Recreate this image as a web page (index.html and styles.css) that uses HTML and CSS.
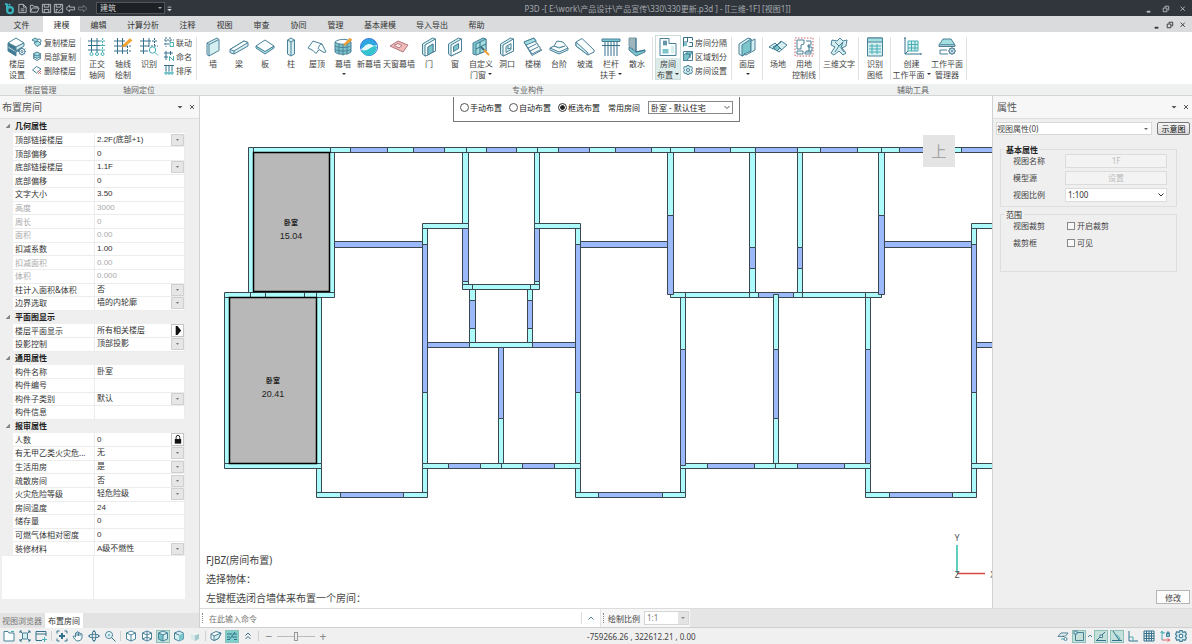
FILE: index.html
```html
<!DOCTYPE html>
<html lang="zh-CN">
<head>
    <meta charset="UTF-8">
    <meta name="viewport" content="width=device-width, initial-scale=1.0">
    <title>P3D</title>
    <link rel="stylesheet" href="styles.css">
</head>
<body>

    <header class="titlebar">
        <div class="quick">
            <svg class="logo" viewBox="0 0 12 12"><circle cx="6.500" cy="7.500" r="2.700"/><path d="M2 1.500l1.800 1v5"/><circle class="dot" cx="6" cy="2.500" r="1"/></svg>
            <button aria-label="新建"><svg viewBox="0 0 12 12"><path d="M2 1.500h5l3 3v6H2zM7 1.500v3h3M4 6.500h4M4 8.500h4"/></svg></button>
            <button aria-label="打开"><svg viewBox="0 0 12 12"><path d="M1.500 10V2.500h3l1 1.500h4v1.500M1.500 10l2-4.500H11L9 10z"/></svg></button>
            <button aria-label="保存"><svg viewBox="0 0 12 12"><path d="M1.500 1.500h9v9h-9zM3.500 1.500v3h5v-3M3.500 10.500V7h5v3.500"/></svg></button>
            <button aria-label="另存为"><svg viewBox="0 0 12 12"><path d="M1.500 1.500h9v9h-9zM3.500 1.500v3h5v-3M3.500 10.500V7h2M6 9.500l4-4"/></svg></button>
            <button aria-label="撤销"><svg viewBox="0 0 12 12"><path d="M1 6l4-3.500v2h5.500v3H5v2z"/></svg></button>
            <button aria-label="重做" class="off"><svg viewBox="0 0 12 12"><path d="M11 6L7 2.500v2H1.500v3H7v2z"/></svg></button>
            <select class="domain" aria-label="专业"><option>建筑</option></select>
            <button aria-label="自定义工具栏" class="more"><svg viewBox="0 0 8 12"><path d="M2 4.500h4"/><path class="solid" d="M1.500 6.500h5L4 9z"/></svg></button>
        </div>
        <div class="caption">P3D -[ E:\work\产品设计\产品宣传\330\330更新.p3d ] - [[三维-1F] [视图1]]</div>
        <div class="winbtns">
            <button aria-label="最小化"><svg viewBox="0 0 12 12"><path class="fat" d="M4 9.500h4"/></svg></button>
            <button aria-label="还原"><svg viewBox="0 0 12 12"><path d="M3.500 5.500h4v4h-4zM5.500 5V3.500h4v4H8"/></svg></button>
            <button aria-label="关闭"><svg viewBox="0 0 12 12"><path d="M4 4l4.500 4.500M8.500 4L4 8.500"/></svg></button>
        </div>
    </header>

    <nav class="tabs">
        <button class="file">文件</button>
        <button class="active">建模</button>
        <button>编辑</button>
        <button>计算分析</button>
        <button>注释</button>
        <button>视图</button>
        <button>审查</button>
        <button>协同</button>
        <button>管理</button>
        <button>基本建模</button>
        <button>导入导出</button>
        <button>帮助</button>
        <div class="docbtns">
            <button aria-label="最小化视图"><svg viewBox="0 0 12 12"><path class="fat" d="M4 9.500h4"/></svg></button>
            <button aria-label="还原视图"><svg viewBox="0 0 12 12"><path d="M3.500 5.500h4v4h-4zM5.500 5V3.500h4v4H8"/></svg></button>
            <button aria-label="关闭视图"><svg viewBox="0 0 12 12"><path d="M4 4l4.500 4.500M8.500 4L4 8.500"/></svg></button>
        </div>
    </nav>

    <section class="ribbon">
        <div class="group">
            <div class="tools first">
                <button class="big"><svg viewBox="0 0 20 20"><path class="w" d="M1 6l8-5 8 5-8 4z"/><path class="d" d="M1 6v3l8 5v-4zM1 11v3l8 5v-3.500z"/><path class="l" d="M9 10l8-4v3l-8 5zM1 9v2l8 4.500V14zM9 15l5-3v-1l-5 3"/><circle class="w" cx="15" cy="14.500" r="3"/><circle class="w" cx="15" cy="14.500" r="1"/><path d="M15 10.500v1.500M15 17v1.500M11 14.500h1.500M17.500 14.500H19M12.200 11.700l1 1M17.800 11.700l-1 1M12.200 17.300l1-1M17.800 17.300l-1-1"/></svg><span>楼层<br>设置</span></button>
                <div class="stack">
                    <button><svg viewBox="0 0 10 10"><path class="t" d="M0 3l3-2 4 2-3 2z"/><circle class="w" cx="7" cy="4" r="2"/><path class="t" d="M2 6l4-2 3 3-4 2.500z"/></svg>复制楼层</button>
                    <button><svg viewBox="0 0 10 10"><path class="w" d="M1 7l4-2 4 2-4 2.500z"/><path class="t" d="M1 5l4-2 4 2-4 2.500z"/><path class="t" d="M1 3l4-2 4 2-4 2z"/></svg>局部复制</button>
                    <button><svg viewBox="0 0 10 10"><path class="w" d="M0.500 5l4-3.500L9 4 4.500 8z"/><path class="red" d="M6 6l3 3M9 6L6 9"/></svg>删除楼层</button>
                </div>
                <i class="end"></i>
            </div>
            <div class="name">楼层管理</div>
        </div>

        <div class="group">
            <div class="tools">
                <button class="big"><svg viewBox="0 0 20 20"><path class="dk" d="M4.500 1v14M10 1v14M1 4h12M1 8.500h12M1 13h12"/><path class="tl dash" d="M15.500 1v14M13 4h6M13 8.500h6M13 13h6"/><circle class="tl" cx="4.500" cy="17" r="1.500"/><circle class="tl" cx="10" cy="17" r="1.500"/><circle class="tl" cx="15.500" cy="17" r="1.500"/></svg><span>正交<br>轴网</span></button>
                <button class="big"><svg viewBox="0 0 20 20"><path class="dk" d="M4.500 1v16M9.500 1v16M1 4h11M1 9h12M1 14h12"/><path class="dk dash" d="M14.500 9v9M13 9h6M13 14h6"/><path class="pen" d="M10 8l7-6.500 2 2L12 9.500l-3 .5z"/></svg><span>轴线<br>绘制</span></button>
                <button class="big"><svg viewBox="0 0 20 20"><path class="dk" d="M4.500 1v16M10 1v9M1 4h11M1 9h9M1 14h8"/><path class="dk dash" d="M15.500 1v9M13 4h6M12 9h7"/><circle class="tl" cx="13.500" cy="13" r="3.200"/><path class="tl" d="M16 15.500l3 3"/></svg><span>识别</span></button>
                <div class="stack">
                    <button><svg viewBox="0 0 10 10"><path class="dk dash" d="M2 0v10M6 0v5M0 3h10M0 7h5"/><path class="tl" d="M6 5.500h3.500v4H6z"/></svg>联动</button>
                    <button><svg viewBox="0 0 10 10"><path class="dk" d="M2 0v9M6.500 0v4M0 2h9M0 6h4"/><path class="tl" d="M5.500 10V5.500l4 4V5"/></svg>命名</button>
                    <button><svg viewBox="0 0 10 10"><path class="dk" d="M0 .5h10M2 0v6M5 0v6M8 0v6"/><path class="tl" d="M1 7h2v2H1zM4 7h2v2H4zM7 7h2v2H7z"/></svg>排序</button>
                </div>
                <i class="end"></i>
            </div>
            <div class="name">轴网定位</div>
        </div>

        <div class="group">
            <div class="tools">
                <button class="big"><svg viewBox="0 0 20 20"><path class="l" d="M4 6l10-5 2 1.500v11L6 19l-2-1.500z"/><path d="M4 6l2 1.500V19M6 7.500l10-5"/></svg><span>墙</span></button>
                <button class="big"><svg viewBox="0 0 20 20"><path class="l" d="M1 12.500L15 4l4 1.500V9L5 17l-4-1.500z"/><path class="w" d="M1 12.500L15 4l4 1.500-14 8.500z"/><path d="M5 14v3"/></svg><span>梁</span></button>
                <button class="big"><svg viewBox="0 0 20 20"><path class="t" d="M1 9l9 5 9-5v2l-9 6-9-6z"/><path class="w" d="M1 9l9-6 9 6-9 5.500z"/></svg><span>板</span></button>
                <button class="big"><svg viewBox="0 0 20 20"><path class="l" d="M6.500 3L10 1l3.500 2v14L10 19l-3.500-2z"/><path d="M6.500 3L10 5l3.500-2M10 5v14"/></svg><span>柱</span></button>
                <button class="big"><svg viewBox="0 0 20 20"><path class="w" d="M1 11l5-7 9 3 4 8-2 .5-5-3-3 4-3-3z"/><path d="M15 7c-3 0-3 3-4 5"/></svg><span>屋顶</span></button>
                <button class="big"><svg viewBox="0 0 20 20"><path class="m" d="M2 5l8 2 8-2v10c-3 3-13 3-16 0z"/><path class="w" d="M2 5c3-3 12-4 16 0-4 3-12 3-16 0z"/><path d="M2 9c4 2 12 2 16 0M2 12.500c4 2 12 2 16 0M6 6.500v11M10 7v11.500M14 6.500v11"/><path class="pen" d="M11 7l6-6 2 2-6.500 5-2 .5z"/></svg><span>幕墙<br><b></b></span></button>
                <button class="big"><svg viewBox="0 0 20 20"><circle cx="10" cy="10" r="8.500" fill="#2da7df" stroke="#3d78e0"/><path d="M2 12c3-1 4-5 8-5 3 0 4 3 8 1 .5 6-3 10-8 10-4 0-7-3-8-6z" fill="#e4fbfb" stroke="none"/><path d="M2 12.500c5 3 9-2 12-3 2-.5 3 0 4 0-1 6-4 9-8 9s-7-2-8-6z" fill="#35c3cd" stroke="none"/></svg><span>新幕墙</span></button>
                <button class="big wide"><svg viewBox="0 0 20 20"><path d="M1 9l8-5 10 4-5 7z" fill="#f2b9b9" stroke="#b07a80"/><path d="M5 8.500l4-2 4 2-3 2.500z" fill="#fde8e6" stroke="#b07a80"/></svg><span>天窗幕墙</span></button>
                <button class="big"><svg viewBox="0 0 20 20"><path class="l" d="M3.500 7l10-6 3 1v12L6 19l-2.500-2z"/><path class="w" d="M6 8l10.500-6v12L14 15V7l-5 3v8l-3 1z"/><path class="m" d="M9 10l5-3v8l-5 3z"/></svg><span>门</span></button>
                <button class="big"><svg viewBox="0 0 20 20"><path class="l" d="M3.500 7l10-6 3 1v12L6 19l-2.500-2z"/><path class="w" d="M6 8l10.500-6v12L6 19z"/><path class="m" d="M8.500 9.500l5-3v5l-5 3z"/></svg><span>窗</span></button>
                <button class="big"><svg viewBox="0 0 20 20"><path class="m" d="M2 6l10-5 3 1v12L5 18l-3-1z"/><path class="t" d="M5 7l10-5v12L5 18z"/><path class="dk" d="M5 12l10-5M9 5v11"/><path d="M12 12l6 6" stroke="#f0a030" stroke-width="2"/><path d="M10 10l3 3" stroke="#3e7085" stroke-width="2"/></svg><span>自定义<br>门窗<b></b></span></button>
                <button class="big"><svg viewBox="0 0 20 20"><path class="l" d="M3.500 7l10-6 3 1v12L6 19l-2.500-2z"/><path class="w" d="M6 8l10.500-6v12L6 19z"/><path class="l" d="M9 9.500l5-3v6l-5 3zM11 9v3l3-1"/></svg><span>洞口</span></button>
                <button class="big"><svg viewBox="0 0 20 20"><path class="w" d="M1 5l10-4 2 3v2l2 1v2l2 1v2l2 1-10 5.500z"/><path class="t" d="M1 5l10-4 2 3L3 8z"/><path d="M3 8l2 3 8-4M5 11l2 3 8-4M7 14l2 3 8-4"/></svg><span>楼梯</span></button>
                <button class="big"><svg viewBox="0 0 20 20"><path class="l" d="M1 11l9-3 9 3v2l-9 4-9-4z"/><path class="w" d="M1 11l4-2 3-5 6 1 5 6-9 4zM5 9l5 2 6-2"/></svg><span>台阶</span></button>
                <button class="big"><svg viewBox="0 0 20 20"><path class="w" d="M1 9V5l6-3.500L19 13v2l-6 3z"/><path class="l" d="M1 5l12 11v2L1 9z"/></svg><span>坡道</span></button>
                <button class="big"><svg viewBox="0 0 20 20"><path class="m" d="M1 2h18v2.500H1z"/><path class="dk" d="M4 4v15M7 4v15M10 4v15M13 4v15M16 4v15M1 8.500h18"/></svg><span>栏杆<br>扶手<b></b></span></button>
                <button class="big"><svg viewBox="0 0 20 20"><path d="M2 1h7v13l-7-5z" fill="#9fb6bf" stroke="#7b97a2"/><path class="m" d="M2 10l7 5 9-2v2l-9 4-7-6z"/><path class="dk" d="M9 1v14l9-2"/></svg><span>散水</span></button>
                <i></i>
                <button class="big on"><svg viewBox="0 0 20 20"><path class="w" d="M2 1.500h9v5h7v12H2z"/><path class="dk" d="M5 5h4M5 7h4M6 3.500v5M8 3.500v5"/><path class="m thin" d="M4.500 12h6v4.500h-6z"/><path class="l thin" d="M13 9h3v7h-3z"/></svg><span>房间<br>布置<b></b></span></button>
                <div class="stack">
                    <button><svg viewBox="0 0 10 10"><path class="dk" d="M.5 9.500v-9h9v3M.5 5h4V.500M6.500 5.500h3v4h-4"/><path class="m thin" d="M1 6h3v3H1z"/></svg>房间分隔</button>
                    <button><svg viewBox="0 0 10 10"><path class="w" d="M.5.5h9v9h-9z"/><path class="m" d="M.5 4.500L5 .500h4.500L4 9.500H.500z"/><path class="dk" d="M3 3h4v4"/></svg>区域划分</button>
                    <button><svg viewBox="0 0 10 10"><path class="l" d="M4 .5h2l.5 1.500 2-.5 1 2L8.500 5l1 1.500-1 2-2-.5L6 9.500H4L3.500 8l-2 .5-1-2L1.500 5l-1-1.500 1-2 2 .5z"/><circle class="w" cx="5" cy="5" r="1.500"/></svg>房间设置</button>
                </div>
                <i></i>
                <button class="big"><svg viewBox="0 0 20 20"><path class="l" d="M2 7l9-6 3 1v12L5 19l-3-2z"/><path class="m" d="M5 8l9-6v12L5 19z"/><path class="l" d="M14 4l4-2v11l-9 5-2-1 7-3z"/></svg><span>面层<br><b></b></span></button>
                <i></i>
                <button class="big"><svg viewBox="0 0 20 20"><path class="l" d="M1 10l6-4 2 2 4-4 6 4-8 7-3-2z"/><path class="m" d="M5 10l4-2 3 3-3 3z"/><path class="dk" d="M7 6l7 7M4 12l9-7"/></svg><span>场地</span></button>
                <button class="big"><svg viewBox="0 0 20 20"><path d="M1 1h18v18H1z" fill="none" stroke="#d0606a" stroke-dasharray="1.500 1.500"/><path class="w" d="M3 3h7v4l-3 1v4H3zM12 4h5v4h-3v2h4v4h-6M3 14h6v3H3zM11 15h6v2h-6z"/><path class="dk" d="M15 8v6"/></svg><span>用地<br>控制线</span></button>
                <i></i>
                <button class="big wide"><svg viewBox="0 0 20 20"><path class="l" d="M3 3l5 1 3-3 3 3 4-1-1 6-4 2 4 5-3 2-4-4-5 4-3-2 4-6-4-2z"/><path class="t" d="M6 5l4 4 4-4-2 6 3 4M10 9l-4 6"/></svg><span>三维文字</span></button>
                <i class="end"></i>
            </div>
            <div class="name">专业构件</div>
        </div>

        <div class="group">
            <div class="tools">
                <button class="big"><svg viewBox="0 0 20 20"><path class="l" d="M2.500 1h15v18h-15z"/><path class="t" d="M2.500 1h15v4h-15z"/><path class="tl" d="M7 7v10M12 7v10M4 9h12M4 12h12M4 15h12"/></svg><span>识别<br>图纸</span></button>
                <i></i>
                <button class="big plane"><svg viewBox="0 0 20 20"><path class="l thin" d="M6 4h10v10H6z"/><path class="tl" d="M6 4h10v10H6zM9.500 4v10M13 4v10M6 7.500h10M6 11h10"/><path class="dk" d="M3 1v16h16M2 1h2M19 16v2M3 17l3-3"/></svg><span>创建<br>工作平面<b></b></span></button>
                <button class="big wide"><svg viewBox="0 0 20 20"><path class="t" d="M6 2h8l4 6H2z"/><path class="w" d="M2 8h16v1.500H2zM3 13h7M3 13v4h8"/><circle class="w" cx="15" cy="14" r="3"/><circle class="w" cx="15" cy="14" r="1"/><path d="M15 10v1.500M15 16.500V18M11 14h1M18 14h1M12.500 11.500l1 1M17.500 16.500l-1-1M17.500 11.500l-1 1M12.500 16.500l1-1"/></svg><span>工作平面<br>管理器</span></button>
                <i class="end"></i>
            </div>
            <div class="name">辅助工具</div>
        </div>
    </section>

    <main>
        <aside class="left">
            <div class="panel-head">
                <h2>布置房间</h2>
                <button aria-label="面板菜单"><svg viewBox="0 0 12 12"><path class="solid" d="M3.500 5h5L6 7.500z"/></svg></button>
                <button aria-label="关闭面板"><svg viewBox="0 0 12 12"><path d="M4 4l4 4M8 4L4 8"/></svg></button>
            </div>
            <div class="props">
                <table>
                    <colgroup><col class="gutter"><col class="label"><col></colgroup>
                    <tbody>
                        <tr class="sec"><td><i></i></td><th colspan="2">几何属性</th></tr>
                        <tr><td></td><th><label for="p1">顶部链接楼层</label></th><td><select id="p1"><option>2.2F(底部+1)</option></select></td></tr>
                        <tr><td></td><th><label for="p2">顶部偏移</label></th><td><input id="p2" value="0"></td></tr>
                        <tr><td></td><th><label for="p3">底部链接楼层</label></th><td><select id="p3"><option>1.1F</option></select></td></tr>
                        <tr><td></td><th><label for="p4">底部偏移</label></th><td><input id="p4" value="0"></td></tr>
                        <tr><td></td><th><label for="p5">文字大小</label></th><td><input id="p5" value="3.50"></td></tr>
                        <tr class="dim"><td></td><th><label for="p6">高度</label></th><td><input id="p6" value="3000" disabled></td></tr>
                        <tr class="dim"><td></td><th><label for="p7">周长</label></th><td><input id="p7" value="0" disabled></td></tr>
                        <tr class="dim"><td></td><th><label for="p8">面积</label></th><td><input id="p8" value="0.00" disabled></td></tr>
                        <tr><td></td><th><label for="p9">扣减系数</label></th><td><input id="p9" value="1.00"></td></tr>
                        <tr class="dim"><td></td><th><label for="p10">扣减面积</label></th><td><input id="p10" value="0.00" disabled></td></tr>
                        <tr class="dim"><td></td><th><label for="p11">体积</label></th><td><input id="p11" value="0.000" disabled></td></tr>
                        <tr><td></td><th><label for="p12">柱计入面积&amp;体积</label></th><td><select id="p12"><option>否</option></select></td></tr>
                        <tr><td></td><th><label for="p13">边界选取</label></th><td><select id="p13"><option>墙的内轮廓</option></select></td></tr>
                        <tr class="sec"><td><i></i></td><th colspan="2">平面图显示</th></tr>
                        <tr><td></td><th><label for="p14">楼层平面显示</label></th><td class="act"><input id="p14" value="所有相关楼层"><button aria-label="选择楼层"><svg viewBox="0 0 12 12"><path d="M4 1h2l4 5-4 5H4z"/></svg></button></td></tr>
                        <tr><td></td><th><label for="p15">投影控制</label></th><td><select id="p15"><option>顶部投影</option></select></td></tr>
                        <tr class="sec"><td><i></i></td><th colspan="2">通用属性</th></tr>
                        <tr><td></td><th><label for="p16">构件名称</label></th><td><input id="p16" value="卧室"></td></tr>
                        <tr><td></td><th><label for="p17">构件编号</label></th><td><input id="p17"></td></tr>
                        <tr><td></td><th><label for="p18">构件子类别</label></th><td><select id="p18"><option>默认</option></select></td></tr>
                        <tr><td></td><th><label for="p19">构件信息</label></th><td><input id="p19"></td></tr>
                        <tr class="sec"><td><i></i></td><th colspan="2">报审属性</th></tr>
                        <tr><td></td><th><label for="p20">人数</label></th><td class="act"><input id="p20" value="0"><button aria-label="锁定人数"><svg viewBox="0 0 12 12"><path d="M3 5.500h7v5H3z"/><path class="ring" d="M4.500 5.500v-2a2 2 0 0 1 4 0v2"/></svg></button></td></tr>
                        <tr><td></td><th><label for="p21">有无甲乙类火灾危...</label></th><td><select id="p21"><option>无</option></select></td></tr>
                        <tr><td></td><th><label for="p22">生活用房</label></th><td><select id="p22"><option>是</option></select></td></tr>
                        <tr><td></td><th><label for="p23">疏散房间</label></th><td><select id="p23"><option>否</option></select></td></tr>
                        <tr><td></td><th><label for="p24">火灾危险等级</label></th><td><select id="p24"><option>轻危险级</option></select></td></tr>
                        <tr><td></td><th><label for="p25">房间温度</label></th><td><input id="p25" value="24"></td></tr>
                        <tr><td></td><th><label for="p26">储存量</label></th><td><input id="p26" value="0"></td></tr>
                        <tr><td></td><th><label for="p27">可燃气体相对密度</label></th><td><input id="p27" value="0"></td></tr>
                        <tr><td></td><th><label for="p28">装修材料</label></th><td><select id="p28"><option>A级不燃性</option></select></td></tr>
                    </tbody>
                </table>
            </div>
            <div class="blank"><span></span></div>
            <div class="panel-tabs">
                <button>视图浏览器</button>
                <button class="active">布置房间</button>
            </div>
        </aside>

        <div class="work">
            <div class="upper">
                <div class="canvas">
                    <svg class="plan" viewBox="200 96 792 512" preserveAspectRatio="xMinYMin slice">
                        <g transform="translate(.5 .5)">
                            <path class="room" d="M253 152h76v139h-76zM229 297h87v166h-87z"/>
                            <!-- walls -->
                            <path class="wall" d="M248 147h5v145h-5zM253 147h77v5h-77zM330 147h20v5h-20zM387 147h26v5h-26zM444 147h22v5h-22zM466 147h20v5h-20zM516 147h21v5h-21zM537 147h21v5h-21zM589 147h26v5h-26zM651 147h19v5h-19zM670 147h24v5h-24zM730 147h25v5h-25zM797 147h23v5h-23zM857 147h24v5h-24zM881 147h18v5h-18zM940 147h21v5h-21z
                                M329 152h5v140h-5zM224 292h26v5h-26zM250 292h15v5h-15zM265 292h39v5h-39zM304 292h12v5h-12zM316 292h18v5h-18z
                                M224 297h5v166h-5zM316 297h5v166h-5zM224 463h97v5h-97zM316 468h5v24h-5zM316 492h24v5h-24zM403 492h24v5h-24z
                                M422 223h46v5h-46zM422 228h5v16h-5zM422 392h5v71h-5zM422 468h5v24h-5z
                                M462 152h6v71h-6zM462 281h6v3h-6zM534 152h5v71h-5zM534 281h5v3h-5zM462 284h10v5h-10zM472 284h58v5h-58zM530 284h9v5h-9z
                                M534 223h46v5h-46zM575 228h5v16h-5zM575 392h5v71h-5zM575 468h5v24h-5z
                                M469 289h6v11h-6zM469 328h6v14h-6zM527 289h5v11h-5zM527 328h5v14h-5zM469 342h63v5h-63z
                                M498 418h5v45h-5zM422 463h26v5h-26zM480 463h21v5h-21zM501 463h21v5h-21zM554 463h26v5h-26zM575 492h23v5h-23zM662 492h23v5h-23z
                                M667 152h6v63h-6zM878 152h6v63h-6zM749 152h6v95h-6zM749 268h6v24h-6zM797 152h5v95h-5zM797 268h5v24h-5z
                                M670 292h15v5h-15zM685 292h64v5h-64zM749 292h9v5h-9zM793 292h9v5h-9zM802 292h63v5h-63zM865 292h16v5h-16z
                                M680 297h5v52h-5zM865 297h5v52h-5zM680 463h27v5h-27zM754 463h21v5h-21zM775 463h22v5h-22zM844 463h26v5h-26zM773 418h5v45h-5z
                                M680 468h5v24h-5zM865 468h5v24h-5zM865 492h24v5h-24zM952 492h24v5h-24z
                                M971 223h30v5h-30zM971 228h5v16h-5zM971 392h5v71h-5zM971 463h30v5h-30zM971 468h5v24h-5z"/>
                            <!-- windows, doors and beams -->
                            <path class="open" d="M350 147h37v5h-37zM413 147h31v5h-31zM486 147h30v5h-30zM558 147h31v5h-31zM615 147h36v5h-36zM694 147h36v5h-36zM755 147h42v5h-42zM820 147h37v5h-37zM899 147h41v5h-41zM961 147h40v5h-40z
                                M334 241h88v6h-88zM422 244h5v148h-5zM340 492h63v5h-63zM462 228h6v53h-6zM534 228h5v53h-5zM575 244h5v148h-5zM580 241h87v6h-87z
                                M469 300h6v28h-6zM527 300h5v28h-5zM427 342h42v5h-42zM532 342h43v5h-43zM498 347h5v71h-5zM448 463h32v5h-32zM522 463h32v5h-32zM598 492h64v5h-64z
                                M667 215h6v79h-6zM878 215h6v79h-6zM749 247h6v21h-6zM797 247h5v21h-5zM758 292h35v5h-35zM680 349h5v116h-5zM773 349h5v69h-5zM865 349h5v114h-5z
                                M707 463h47v5h-47zM797 463h47v5h-47zM889 492h63v5h-63zM884 241h87v6h-87zM971 244h5v148h-5zM976 342h30v5h-30z"/>
                            <path class="wall" d="M773 294h5v55h-5z"/>
                            <path class="edge" d="M253 152h76v139h-76zM229 297h87v166h-87z"/>
                        </g>
                        <text class="rname" x="291" y="225">卧室</text>
                        <text class="rarea" x="291" y="239">15.04</text>
                        <text class="rname" x="273" y="383">卧室</text>
                        <text class="rarea" x="273" y="397">20.41</text>
                        <path d="M957 545v28" stroke="#5fcfc0" stroke-width="2"/>
                        <path d="M957 573.500h28" stroke="#d64545" stroke-width="1.500"/>
                        <text class="axis" x="957" y="541">Y</text>
                        <text class="axis" x="957" y="578">Z</text>
                        <text class="axis" x="993" y="578">X</text>
                    </svg>

                    <form class="options">
                        <label><input type="radio" name="mode">手动布置</label>
                        <label><input type="radio" name="mode">自动布置</label>
                        <label><input type="radio" name="mode" checked>框选布置</label>
                        <label for="common">常用房间</label>
                        <select id="common"><option>卧室 - 默认住宅</option></select>
                    </form>

                    <div class="cube">上</div>

                    <div class="log">
                        <p>FJBZ(房间布置)</p>
                        <p>选择物体：</p>
                        <p>左键框选闭合墙体来布置一个房间：</p>
                    </div>
                </div>

                <aside class="right">
                    <div class="panel-head">
                        <h2>属性</h2>
                        <button aria-label="面板菜单"><svg viewBox="0 0 12 12"><path class="solid" d="M3.500 5h5L6 7.500z"/></svg></button>
                        <button aria-label="关闭面板"><svg viewBox="0 0 12 12"><path d="M4 4l4 4M8 4L4 8"/></svg></button>
                    </div>
                    <div class="pick">
                        <select aria-label="属性对象"><option>视图属性(0)</option></select>
                        <button>示意图</button>
                    </div>
                    <fieldset>
                        <legend class="strong">基本属性</legend>
                        <div class="field"><label for="vname">视图名称</label><input id="vname" value="1F" disabled></div>
                        <div class="field"><label for="vsrc">模型源</label><button id="vsrc" disabled>设置</button></div>
                        <div class="field"><label for="vscale">视图比例</label><select id="vscale"><option>1:100</option></select></div>
                    </fieldset>
                    <fieldset>
                        <legend>范围</legend>
                        <div class="field"><span>视图裁剪</span><label><input type="checkbox">开启裁剪</label></div>
                        <div class="field"><span>裁剪框</span><label><input type="checkbox">可见</label></div>
                    </fieldset>
                    <button class="modify">修改</button>
                </aside>
            </div>

            <div class="command">
                <div class="entry">
                    <i class="grip"></i>
                    <input aria-label="命令" placeholder="在此输入命令">
                    <button aria-label="展开"><svg viewBox="0 0 12 12"><path d="M3.500 7.500L6 5l2.500 2.500"/></svg></button>
                </div>
                <div class="scale">
                    <i class="grip"></i>
                    <label for="dscale">绘制比例</label>
                    <select id="dscale"><option>1:1</option></select>
                </div>
            </div>
        </div>
    </main>

    <footer class="status">
        <div class="status-left">
            <button aria-label="文件夹"><svg viewBox="0 0 12 12"><path class="w" d="M1 11V1.500h4L6 3h5v8z"/><path class="tl" d="M8 1.500h3"/></svg></button>
            <button aria-label="全图"><svg viewBox="0 0 12 12"><path class="dk" d="M1 1l2 2M11 1L9 3M1 11l2-2M11 11L9 9M1 3V1h2M9 1h2v2M1 9v2h2M9 11h2V9"/><path class="l" d="M3.500 3h5v6h-5z"/></svg></button>
            <button aria-label="新建窗口"><svg viewBox="0 0 12 12"><path class="dk" d="M7 10.500H1v-9h10V6M1 4h10"/><path class="tl" d="M9.500 7v5M7 9.500h5"/></svg></button>
            <i></i>
            <button aria-label="缩放全部"><svg viewBox="0 0 12 12"><path class="dk" d="M1 3.500V1h2.500M8.500 1H11v2.500M11 8.500V11H8.500M3.500 11H1V8.500"/><path class="dk fat" d="M6 3v6M3 6h6"/></svg></button>
            <button aria-label="平移"><svg viewBox="0 0 12 12"><path class="w" d="M3.500 7V3q.7-1 1.500 0V2q.7-1 1.500 0v1q.8-1 1.500 0v1q1-1 2 0v4q-1 3-4 3-2 0-3-1.500L1 6.500q1-1.500 2.500.5z"/><path d="M5 3v3M6.500 3v3M8 4v2"/></svg></button>
            <button aria-label="动态观察"><svg viewBox="0 0 12 12"><ellipse cx="6" cy="6" rx="5" ry="1.800"/><ellipse cx="6" cy="6" rx="1.800" ry="5"/><path class="dk" d="M4.500 2.500L6 .500l1.500 2M4.500 9.500l1.500 2 1.500-2M2.500 4.500L.500 6l2 1.500M9.500 4.500l2 1.500-2 1.500"/></svg></button>
            <button aria-label="窗口缩放"><svg viewBox="0 0 12 12"><circle class="w" cx="5" cy="5" r="3.500"/><circle class="m thin" cx="5" cy="5" r="1.500"/><path class="dk" d="M7.500 7.500l4 4"/></svg></button>
            <i></i>
            <button aria-label="线框"><svg viewBox="0 0 12 12"><path class="w" d="M6 1l4.500 2v6L6 11 1.500 9V3z"/><path d="M1.500 3L6 5l4.500-2M6 5v6"/></svg></button>
            <button aria-label="隐藏线"><svg viewBox="0 0 12 12"><path class="w" d="M6 1l4.500 2v6L6 11 1.500 9V3z"/><path d="M1.500 3L6 5l4.500-2M6 1v10M1.500 9L6 7l4.500 2"/></svg></button>
            <button aria-label="着色" class="on"><svg viewBox="0 0 12 12"><path class="l" d="M6 1l4.500 2v6L6 11 1.500 9V3z"/><path class="m" d="M1.500 3L6 5v6L1.500 9z"/><path d="M6 5l4.500-2"/></svg></button>
            <button aria-label="真实"><svg viewBox="0 0 12 12"><path class="l" d="M6 1l4.500 2v6L6 11 1.500 9V3z"/><path class="m thin" d="M6 5l4.500-2v6L6 11z"/><path d="M1.500 3L6 5"/></svg></button>
            <button aria-label="渲染"><svg viewBox="0 0 12 12"><path d="M2 4l4 1v6L2 9z" fill="#d9e8e8" stroke="none"/><path d="M6 5l4-1v5l-4 2z" fill="#a3c9cd" stroke="none"/><path d="M2 4l4-1 4 1-4 1z" fill="#eff7f7" stroke="none"/></svg></button>
            <i></i>
            <button aria-label="剖切"><svg viewBox="0 0 12 12"><path class="w" d="M1 4l5-2.500L11 3 8.500 8.500 4 10.500 1 9z"/><path class="l" d="M4 6l7-3-2.500 5.500-4.500 2z"/><path d="M1 4l3 2"/></svg></button>
            <button aria-label="图层" class="on deep"><svg viewBox="0 0 12 12"><path class="dk" d="M1 4h5M1 7h3M7 4h4M6 7h5M3 10l6-8M1 9.500h3M8 9.500h3"/></svg></button>
            <button aria-label="更多"><svg viewBox="0 0 12 12"><path class="dk" d="M3.500 5.500L6 3l2.500 2.500M3.500 9L6 6.500 8.500 9"/></svg></button>
            <i></i>
            <button aria-label="缩小" class="zoomer">−</button>
            <input type="range" aria-label="缩放" min="0" max="100" value="50">
            <button aria-label="放大" class="zoomer">+</button>
        </div>
        <output>-759266.26 , 322612.21 , 0.00</output>
        <div class="status-right">
            <button aria-label="显示"><svg viewBox="0 0 12 12"><path d="M1 6.500L4 3h7L8.500 6zM5 6.500h2"/><path class="tl" d="M4 9h3"/><circle class="w" cx="8.500" cy="9" r="1.500"/></svg></button>
            <button aria-label="捕捉" class="on"><svg viewBox="0 0 12 12"><path d="M2.500 2.500h8v8h-8z"/><path class="l" d="M1 1h3v3H1z"/></svg></button>
            <button aria-label="捕捉选项" class="tiny"><svg viewBox="0 0 6 12"><path d="M1 7l2-2 2 2"/></svg></button>
            <button aria-label="最近点" class="on"><svg viewBox="0 0 12 12"><path class="dk" d="M1 10.500h10M2 10L10 2"/><path class="w" d="M5 5h2.500v2.500H5z"/></svg></button>
            <button aria-label="极轴" class="on"><svg viewBox="0 0 12 12"><path class="dk" d="M1 10.500h10M2 1l6 9"/><path class="tl" d="M4 5q4 0 5 5"/></svg></button>
            <button aria-label="正交"><svg viewBox="0 0 12 12"><path class="dk" d="M2 1v10h9"/><path class="tl" d="M2 7h4v4"/></svg></button>
            <button aria-label="栅格"><svg viewBox="0 0 12 12"><path class="dk" d="M1 1h10v10H1zM3.500 1v10M6 1v10M8.500 1v10M1 3.500h10M1 6h10M1 8.500h10"/></svg></button>
            <button aria-label="坐标"><svg viewBox="0 0 12 12"><path class="tl" d="M3 10V2M1.500 3L3 1l1.500 2M3 3h3"/><path class="red" d="M3 10h7M8.500 8.500L11 10l-2.500 1.500"/><path class="m" d="M7.500 3.500h3v3h-3zM8 3.500V2h2v1.500"/></svg></button>
            <button aria-label="设置"><svg viewBox="0 0 10 10"><path class="l" d="M4 .5h2l.5 1.500 2-.5 1 2L8.500 5l1 1.500-1 2-2-.5L6 9.500H4L3.500 8l-2 .5-1-2L1.500 5l-1-1.500 1-2 2 .5z"/><circle class="w" cx="5" cy="5" r="1.500"/></svg></button>
        </div>
    </footer>

</body>
</html>
```
FILE: styles.css
```css
* {
    box-sizing: border-box;
}

body {
    margin: 0;
    height: 100vh;
    display: flex;
    flex-direction: column;
    overflow: hidden;
    background: #f0f0f0;
    color: #444;
    font-family: "Noto Sans", "Noto Sans CJK SC", sans-serif;
    font-size: 8px;
    line-height: 11px;
}

button, input, select {
    margin: 0;
    padding: 0;
    border: none;
    border-radius: 0;
    background: none;
    color: inherit;
    font: inherit;
    min-width: 0;
}

select {
    appearance: none;
}

button {
    display: flex;
    align-items: center;
    justify-content: center;
    white-space: nowrap;
}

svg {
    display: block;
    flex: none;
    fill: none;
    stroke: #4a8199;
}

/* shared icon paints */
.w { fill: #fbfefe; }
.l { fill: #d5eef0; }
.t { fill: #a4dfe0; }
.m { fill: #7cc5cb; }
.d { fill: #3e7891; }
.dk { stroke: #35708a; }
.tl { stroke: #45adb4; }
.thin { stroke: none; }
.red { stroke: #e0616a; }
.dash { stroke-dasharray: 2 1; }
.fat { stroke-width: 2; }
.pen { fill: #f5a52c; stroke: #e08a28; stroke-width: .5; }

/* title bar */
.titlebar {
    flex: none;
    height: 16px;
    display: flex;
    align-items: center;
    background: #31363d;
    color: #a4a8ac;
}

.titlebar svg {
    stroke: #b9bdc1;
    width: 11px;
    height: 11px;
}

.quick {
    display: flex;
    align-items: center;
    padding-left: 3px;
}

.quick button {
    width: 12px;
}

.titlebar .logo {
    width: 13px;
    height: 13px;
    stroke: #38b3bd;
    stroke-width: 2;
}

.logo .dot {
    fill: #38b3bd;
    stroke: none;
}

.quick .off {
    opacity: .5;
}

.domain {
    width: 69px;
    height: 12px;
    margin-left: 8px;
    padding-left: 3px;
    line-height: 10px;
    border: 1px solid #50555b;
    background: #1d2024 url('data:image/svg+xml,<svg xmlns="http://www.w3.org/2000/svg" width="8" height="8"><path d="M2 3h4L4 5z" fill="%23aaa"/></svg>') right center no-repeat;
    color: #cfd1d3;
}

.quick .more {
    width: 8px;
}

.solid {
    fill: #555;
    stroke: none;
}

.titlebar .solid {
    fill: #ddd;
}

.caption {
    flex: 1;
    text-align: center;
    white-space: nowrap;
}

.winbtns {
    display: flex;
    gap: 5px;
    padding-right: 4px;
}

.winbtns button, .docbtns button {
    width: 12px;
}

/* ribbon tabs */
.tabs {
    flex: none;
    height: 16px;
    display: flex;
    background: #d9dbdc;
    color: #333;
}

.tabs > button {
    min-width: 37px;
    padding: 0 10px;
}

.tabs > .file {
    width: 43px;
}

.tabs > .active {
    background: #fff;
}

.docbtns {
    display: flex;
    margin-left: auto;
    padding-right: 4px;
    gap: 1px;
}

.docbtns svg {
    width: 11px;
    height: 11px;
    stroke: #333;
}

/* ribbon */
.ribbon {
    flex: none;
    display: flex;
    background: linear-gradient(#fff 52px, #eff1f1 52px);
    border-bottom: 1px solid #d2d5d6;
}

.tools {
    display: flex;
    height: 52px;
    padding: 3px 0 4px 3px;
}

.tools.first {
    padding-left: 4px;
}

.name {
    height: 11px;
    text-align: center;
    color: #666;
}

.tools i {
    flex: none;
    width: 1px;
    margin: 2px 2px 0;
    background: #e0e1e2;
}

.tools .end {
    margin-right: 0;
}

.big {
    width: 26px;
    flex-direction: column;
    justify-content: flex-start;
    text-align: center;
}

.big.wide {
    width: 34px;
}

.big.plane {
    width: 37px;
}

.big svg {
    width: 20px;
    height: 20px;
    margin: 2px 0 1px;
}

.big b {
    display: inline-block;
    margin-left: 2px;
    border: 2px solid transparent;
    border-top-color: #333;
    border-bottom: none;
    vertical-align: 3px;
}

.big.on {
    border: 1px solid #cbdcda;
    background: linear-gradient(#fff 22px, #dcecea 22px);
}

.big.on svg {
    margin: 1px 0;
}

.stack {
    display: flex;
    flex-direction: column;
    padding: 0 2px;
}

.stack button {
    height: 14px;
    gap: 2px;
    justify-content: flex-start;
}

.stack svg {
    width: 10px;
    height: 10px;
}

/* body */
main {
    flex: 1;
    min-height: 0;
    display: flex;
}

.left {
    flex: none;
    width: 200px;
    display: flex;
    flex-direction: column;
    border-right: 1px solid #cfd1d2;
    background: #efefef;
}

.panel-head {
    flex: none;
    display: flex;
    align-items: center;
    height: 23px;
    padding: 0 1px 0 2px;
    background: #f7f7f7;
    border-bottom: 1px solid #dfdfdf;
}

.panel-head h2 {
    flex: 1;
    margin: 0;
    font-size: 10px;
    font-weight: normal;
    color: #555;
}

.panel-head svg {
    width: 12px;
    height: 12px;
    stroke: #555;
}

.panel-head .solid {
    stroke: none;
}

.props {
    flex: 1;
    min-height: 0;
    padding: 0 14px 0 2px;
}

.props table {
    width: 100%;
    height: 100%;
    table-layout: fixed;
    border-collapse: collapse;
    line-height: 10px;
}

.props .gutter {
    width: 10px;
}

.props .label {
    width: 82px;
}

.props td, .props th {
    height: 13px;
    padding: 0;
    border: 1px solid transparent;
    text-align: left;
    font-weight: normal;
    white-space: nowrap;
}

.props th {
    padding-left: 2px;
    color: #333;
}

.props tr:not(.sec) th, .props tr:not(.sec) td:last-child {
    border-color: #ececec;
    background: #fff;
}

.props .sec th {
    font-weight: bold;
    color: #222;
}

.sec i {
    display: block;
    width: 4px;
    height: 4px;
    margin-left: 3px;
    background: linear-gradient(135deg, transparent 50%, #888 50%);
}

.props .dim th {
    color: #aaa;
}

.props input, .props select {
    display: block;
    width: 100%;
    height: 12px;
    padding-left: 2px;
    color: #333;
    font-family: "Liberation Sans", "Noto Sans CJK SC", sans-serif;
    line-height: 12px;
}

.props .dim input {
    color: #aaa;
}

.props select {
    background: url('data:image/svg+xml,<svg xmlns="http://www.w3.org/2000/svg" width="13" height="12"><path d="M.5.5h12v11H.5z" fill="%23e6e6e6" stroke="%23cfcfcf"/><path d="M5 5h3L6.500 7z" fill="%23777"/></svg>') right center no-repeat;
}

.act {
    position: relative;
}

.act button {
    position: absolute;
    top: 0;
    right: 0;
    width: 13px;
    height: 100%;
    border: 1px solid #c4c4c4;
    background: #fff;
}

.act svg {
    width: 11px;
    height: 11px;
    fill: #111;
    stroke: none;
}

.act .ring {
    fill: none;
    stroke: #111;
}

.blank {
    flex: none;
    height: 43px;
    margin: 0 14px 14px 2px;
    background: #fff;
}

.blank span {
    display: block;
    width: 92px;
    height: 100%;
    border-right: 1px solid #ececec;
}

.panel-tabs {
    flex: none;
    display: flex;
    height: 15px;
    background: #e3e3e3;
    color: #777;
}

.panel-tabs button {
    padding: 0 3px 0 2px;
}

.panel-tabs .active {
    padding: 0 3px;
    background: #fff;
    color: #333;
}

.work {
    flex: 1;
    min-width: 0;
    display: flex;
    flex-direction: column;
}

.upper {
    flex: 1;
    min-height: 0;
    display: flex;
}

.canvas {
    position: relative;
    flex: 1;
    min-width: 0;
    overflow: hidden;
    background: #fff;
}

.plan {
    position: absolute;
    width: 100%;
    height: 100%;
    stroke: none;
}

.room {
    fill: #b8b8b8;
}

.edge {
    fill: none;
    stroke: #000;
    stroke-width: 1.5;
}

.wall, .open {
    stroke: #3a474e;
    stroke-width: 1;
}

.wall {
    fill: #acfaf9;
}

.open {
    fill: #9cb9fc;
}

.plan text {
    text-anchor: middle;
    fill: #222;
}

.plan .rname {
    font-size: 7px;
    font-weight: bold;
}

.plan .rarea {
    font-family: "Liberation Sans", sans-serif;
    font-size: 9px;
}

.plan .axis {
    font-size: 9px;
    fill: #555;
}

.options {
    position: absolute;
    top: 1px;
    left: 253px;
    display: flex;
    align-items: center;
    height: 25px;
    padding: 0 6px 4px;
    border: 1px solid #777;
    border-top: none;
    background: #fff;
    color: #222;
}

.options label {
    display: flex;
    align-items: center;
    gap: 1px;
    margin-right: 7px;
}

.options label[for] {
    margin: 0 8px 0 1px;
}

.options input {
    appearance: none;
    width: 9px;
    height: 9px;
    padding: 1px;
    border: 1px solid #555;
    border-radius: 50%;
}

.options input:checked {
    border-color: #333;
    background: #222 content-box;
    box-shadow: inset 0 0 0 1px #fff;
}

.options select {
    width: 85px;
    height: 13px;
    padding-left: 2px;
    border: 1px solid #888;
    background: url('data:image/svg+xml,<svg xmlns="http://www.w3.org/2000/svg" width="10" height="8"><path d="M2.500 3L5 5.500 7.500 3" fill="none" stroke="%23555"/></svg>') right center no-repeat;
    line-height: 11px;
}

.cube {
    position: absolute;
    top: 39px;
    right: 37px;
    width: 32px;
    height: 32px;
    background: #e4e4e4;
    color: #a5a5a5;
    font-size: 15px;
    line-height: 32px;
    text-align: center;
}

.log {
    position: absolute;
    left: 6px;
    bottom: 0;
    font-size: 10px;
    line-height: 19px;
    color: #444;
}

.log p {
    margin: 0;
}

/* view properties */
.right {
    flex: none;
    width: 200px;
    display: flex;
    flex-direction: column;
    border-left: 1px solid #cfd1d2;
    background: #efefef;
}

.right .panel-head {
    padding: 0 0 0 4px;
}

.pick {
    display: flex;
    gap: 5px;
    padding: 3px 2px 14px 3px;
}

.pick select {
    flex: 1;
    height: 13px;
    border: 1px solid #d9d9d9;
    background: #fff url('data:image/svg+xml,<svg xmlns="http://www.w3.org/2000/svg" width="10" height="8"><path d="M3 3h4L5 5z" fill="%23666"/></svg>') right center no-repeat;
    line-height: 11px;
}

.pick button {
    width: 33px;
    height: 13px;
    border: 1px solid #777;
    border-radius: 2px;
    background: linear-gradient(#f6f6f6, #d9d9d9);
    color: #111;
}

fieldset {
    position: relative;
    min-width: 0;
    height: 58px;
    margin: 0 15px 7px 7px;
    padding: 2px 9px 0 12px;
    border: 1px solid #dedede;
}

legend {
    position: absolute;
    top: -6px;
    left: 3px;
    padding: 0 2px;
    background: #efefef;
    color: #333;
}

legend.strong {
    font-weight: bold;
    color: #222;
}

.field {
    display: flex;
    align-items: center;
    height: 17px;
}

.field > :first-child {
    width: 52px;
}

.field input:not([type="checkbox"]), .field button, .field select {
    flex: 1;
    height: 14px;
    border: 1px solid #dcdcdc;
    background: #f3f3f3;
    color: #bbb;
    text-align: center;
}

.field select {
    padding-left: 2px;
    background: #fff url('data:image/svg+xml,<svg xmlns="http://www.w3.org/2000/svg" width="10" height="8"><path d="M2.500 2.500L5 5l2.500-2.500" fill="none" stroke="%23333"/></svg>') right center no-repeat;
    color: #333;
    text-align: left;
    line-height: 12px;
}

.field label:last-child {
    display: flex;
    align-items: center;
    gap: 2px;
    padding-left: 2px;
}

.field input[type="checkbox"] {
    appearance: none;
    width: 8px;
    height: 8px;
    border: 1px solid #888;
    background: #f8f8f8;
}

.modify {
    width: 34px;
    height: 14px;
    margin: auto 2px 4px auto;
    border: 1px solid #b5b5b5;
    background: #fcfcfc;
}

/* command line */
.command {
    flex: none;
    height: 20px;
    display: flex;
    gap: 1px;
    border-top: 1px solid #dcdcdc;
    border-bottom: 1px solid #d0d0d0;
    background: #e5e5e5;
}

.entry {
    width: 400px;
    display: flex;
    align-items: center;
    background: #fff;
}

.entry input {
    flex: 1;
    height: 12px;
    margin-left: 6px;
    border-right: 1px solid #ddd;
    color: #777;
}

.entry input::placeholder {
    color: #777;
}

.entry button {
    width: 18px;
}

.entry svg {
    width: 12px;
    height: 12px;
}

.grip {
    width: 1px;
    height: 10px;
    margin-left: 2px;
    border-left: 1px dotted #888;
}

.scale {
    display: flex;
    align-items: center;
    gap: 4px;
    padding-right: 1px;
    background: #f7f7f7;
}

.scale select {
    width: 45px;
    height: 14px;
    padding-left: 2px;
    border: 1px solid #d5d5d5;
    background: #fff url('data:image/svg+xml,<svg xmlns="http://www.w3.org/2000/svg" width="10" height="14"><path d="M0 0h10v14H0z" fill="%23e3e3e3"/><path d="M3 6h4L5 8z" fill="%23888"/></svg>') right center no-repeat;
    color: #777;
    line-height: 12px;
}

/* status bar */
.status {
    flex: none;
    height: 16px;
    display: flex;
    align-items: center;
    background: #f0f0f0;
}

.status-left {
    flex: 0 0 49%;
    display: flex;
    align-items: center;
    padding-left: 1px;
}

.status-left button, .status-right button {
    width: 16px;
    height: 16px;
}

.status svg {
    width: 12px;
    height: 12px;
}

.status i {
    width: 1px;
    height: 10px;
    margin: 0 2px;
    background: #d0d0d0;
}

.status .on {
    width: 14px;
    height: 13px;
    margin: 0 1px;
    border: 1px solid #8fc0ba;
    background: #c3e0db;
}

.status .deep {
    background: #7fd0cc;
}

.status-left .zoomer {
    font-size: 12px;
    color: #888;
}

.status input {
    appearance: none;
    width: 38px;
    height: 10px;
    background: linear-gradient(#bbb, #bbb) center / 100% 1px no-repeat;
}

.status input::-webkit-slider-thumb {
    appearance: none;
    width: 4px;
    height: 9px;
    border: 1px solid #999;
    background: #eee;
}

output {
    padding-left: 3px;
}

.status-right {
    display: flex;
    align-items: center;
    margin-left: auto;
    padding-right: 3px;
}

.status-right .tiny {
    width: 6px;
}

.status .tiny svg {
    width: 6px;
}
```
